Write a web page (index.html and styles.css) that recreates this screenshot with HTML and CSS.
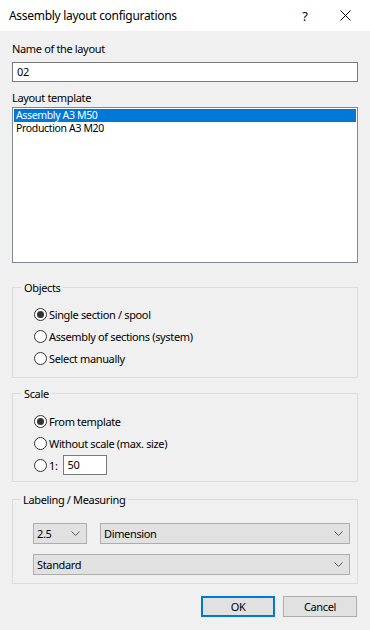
FILE: index.html
```html
<!DOCTYPE html>
<html lang="en">
<head>
<meta charset="utf-8">
<title>Assembly layout configurations</title>
<link rel="stylesheet" href="styles.css">
</head>
<body>
<div class="dialog">
  <header class="titlebar">
    <span class="title">Assembly layout configurations</span>
    <span class="help">?</span>
    <span class="close">
      <svg width="11" height="11" viewBox="0 0 11 11"><path d="M0.5 0.5 L10.5 10.5 M10.5 0.5 L0.5 10.5" stroke="#000" stroke-width="1" fill="none"/></svg>
    </span>
  </header>
  <main class="content">
    <div class="field-label">Name of the layout</div>
    <div class="textbox">02</div>
    <div class="field-label template-label">Layout template</div>
    <div class="listbox">
      <div class="item selected">Assembly A3 M50</div>
      <div class="item">Production A3 M20</div>
    </div>

    <fieldset class="group objects">
      <legend>Objects</legend>
      <div class="rows">
        <label class="radio-row"><span class="radio checked"></span>Single section / spool</label>
        <label class="radio-row"><span class="radio"></span>Assembly of sections (system)</label>
        <label class="radio-row"><span class="radio"></span>Select manually</label>
      </div>
    </fieldset>

    <fieldset class="group scale">
      <legend>Scale</legend>
      <div class="rows">
        <label class="radio-row"><span class="radio checked"></span>From template</label>
        <label class="radio-row"><span class="radio"></span>Without scale (max. size)</label>
        <label class="radio-row"><span class="radio"></span>1:<span class="smallbox">50</span></label>
      </div>
    </fieldset>

    <fieldset class="group labeling">
      <legend>Labeling / Measuring</legend>
      <div class="combos">
        <div class="combo-row">
          <div class="combo size"><span>2.5</span><svg width="9" height="5" viewBox="0 0 9 5"><path d="M0.5 0.5 L4.5 4.5 L8.5 0.5" stroke="#555" fill="none"/></svg></div>
          <div class="combo grow"><span>Dimension</span><svg width="9" height="5" viewBox="0 0 9 5"><path d="M0.5 0.5 L4.5 4.5 L8.5 0.5" stroke="#555" fill="none"/></svg></div>
        </div>
        <div class="combo"><span>Standard</span><svg width="9" height="5" viewBox="0 0 9 5"><path d="M0.5 0.5 L4.5 4.5 L8.5 0.5" stroke="#555" fill="none"/></svg></div>
      </div>
    </fieldset>

    <div class="buttons">
      <button class="btn default">OK</button>
      <button class="btn">Cancel</button>
    </div>
  </main>
</div>
</body>
</html>
```
FILE: styles.css
```css
* { box-sizing: border-box; }
html, body { margin: 0; padding: 0; }
body {
  width: 370px;
  height: 630px;
  background: #f0f0f0;
  font-family: "Noto Sans", "Open Sans", sans-serif;
  font-size: 11px;
  letter-spacing: -0.35px;
  color: #000;
  overflow: hidden;
}
.dialog { width: 370px; height: 630px; display: flex; flex-direction: column; }
.titlebar {
  height: 31px;
  background: #fff;
  display: flex;
  align-items: center;
  padding-left: 9px;
  font-size: 12px;
  letter-spacing: -0.3px;
}
.title { flex: 1; }
.help { width: 20px; text-align: center; font-size: 13px; margin-right: 25px; }
.close { width: 11px; height: 11px; display: flex; margin-right: 19px; }
.content { padding: 10px 12px 0 12px; display: flex; flex-direction: column; }
.field-label { line-height: 15px; height: 15px; margin-bottom: 6px; }
.template-label { margin-top: 8px; margin-bottom: 2px; }
.textbox {
  height: 20px;
  border: 1px solid #7a7a7a;
  background: #fff;
  padding-left: 4px;
  line-height: 18px;
}
.listbox {
  height: 156px;
  border: 1px solid #828790;
  background: #fff;
  padding: 1px;
}
.item { height: 13px; line-height: 13px; font-size: 10.5px; padding-left: 2px; overflow: hidden; }
.item.selected { background: #0078d7; color: #fff; }

.group {
  margin: 0;
  border: 1px solid #dcdcdc;
  padding: 0 8px 0 21px;
  min-width: 0;
}
.group legend {
  line-height: 15px;
  padding: 0 3px;
  margin-left: -13px;
}
.objects { margin-top: 17px; padding-bottom: 8px; }
.objects .rows { padding-top: 8px; }
.scale { margin-top: 8px; padding-bottom: 5px; }
.scale .rows { padding-top: 9px; }
.labeling { margin-top: 10px; padding: 0 7px 8px 20px; }
.labeling .combos { padding-top: 16px; display: flex; flex-direction: column; gap: 10px; }

.rows { display: flex; flex-direction: column; }
.radio-row { height: 22px; display: flex; align-items: center; }
.radio {
  width: 13px; height: 13px;
  border: 1px solid #333;
  border-radius: 50%;
  background: #fff;
  margin-right: 2px;
  display: flex; align-items: center; justify-content: center;
}
.radio.checked::after {
  content: "";
  width: 7px; height: 7px; border-radius: 50%; background: #333;
}
.smallbox {
  width: 44px; height: 20px;
  border: 1px solid #7a7a7a;
  background: #fff;
  margin-left: 5px;
  padding-left: 4px;
  line-height: 18px;
}

.combo-row { display: flex; gap: 13px; }
.combo {
  height: 21px;
  border: 1px solid #adadad;
  background: #e1e1e1;
  display: flex;
  align-items: center;
  justify-content: space-between;
  padding: 0 6px 0 3px;
}
.combo.size { width: 54px; }
.combo.grow { flex: 1; }

.buttons {
  display: flex;
  justify-content: flex-end;
  gap: 8px;
  margin-top: 12px;
  margin-right: 1px;
}
.btn {
  width: 74px; height: 21px;
  border: 1px solid #adadad;
  background: #e1e1e1;
  font: inherit;
  letter-spacing: inherit;
  color: #000;
  padding: 0;
}
.btn.default { border: 2px solid #0078d7; }
```
